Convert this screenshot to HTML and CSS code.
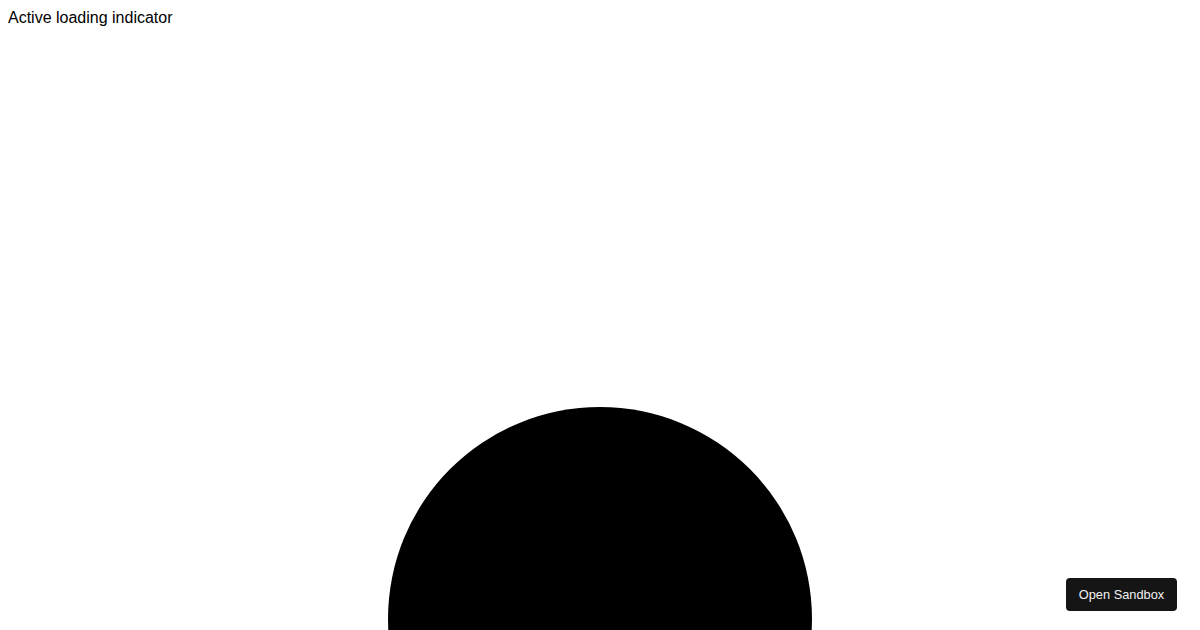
FILE: index.html
```html
<!DOCTYPE html>
<html lang="en">
<head>
<meta charset="utf-8">
<title>Active loading indicator</title>
<link rel="stylesheet" href="styles.css">
</head>
<body>
<p class="label">Active loading indicator</p>
<div class="stage">
  <div class="indicator" role="progressbar" aria-label="Loading"></div>
</div>
<button class="sandbox-btn" type="button">Open Sandbox</button>
</body>
</html>
```
FILE: styles.css
```css
html {
  overflow: hidden;
  background: #ffffff;
}
body {
  margin: 8px;
  font-family: "Liberation Sans", Arial, sans-serif;
  color: #000000;
}
.label {
  margin: 0;
  font-size: 16px;
  line-height: 20px;
}
.stage {
  display: flex;
  justify-content: center;
  padding-top: 379px;
}
.indicator {
  width: 424px;
  height: 424px;
  border-radius: 50%;
  background: #000000;
  flex: none;
}
.sandbox-btn {
  position: fixed;
  right: 23px;
  bottom: 19px;
  width: 111px;
  height: 33px;
  padding: 0;
  border: none;
  border-radius: 4px;
  background: #151515;
  color: #f2f2f2;
  font-family: "Liberation Sans", Arial, sans-serif;
  font-size: 12.8px;
  cursor: pointer;
}
```
